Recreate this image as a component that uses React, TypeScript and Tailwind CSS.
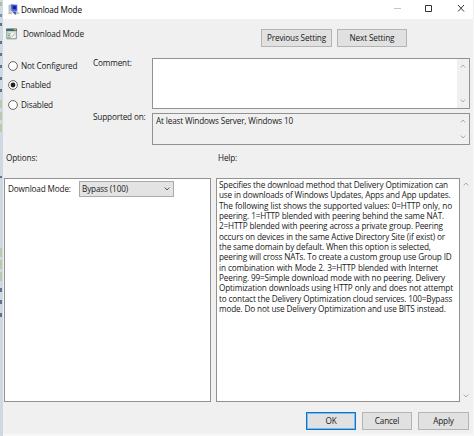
import type { ReactNode } from "react";
import clsx from "clsx";

const HELP_LINES = [
    { text: "Specifies the download method that Delivery Optimization can", width: "w-[229px]" },
    { text: "use in downloads of Windows Updates, Apps and App updates.", width: "w-[231px]" },
    { text: "The following list shows the supported values: 0=HTTP only, no", width: "w-[233px]" },
    { text: "peering. 1=HTTP blended with peering behind the same NAT.", width: "w-[225px]" },
    { text: "2=HTTP blended with peering across a private group. Peering", width: "w-[217px]" },
    { text: "occurs on devices in the same Active Directory Site (if exist) or", width: "w-[226px]" },
    { text: "the same domain by default. When this option is selected,", width: "w-[211px]" },
    { text: "peering will cross NATs. To create a custom group use Group ID", width: "w-[231px]" },
    { text: "in combination with Mode 2. 3=HTTP blended with Internet", width: "w-[219px]" },
    { text: "Peering. 99=Simple download mode with no peering. Delivery", width: "w-[226px]" },
    { text: "Optimization downloads using HTTP only and does not attempt", width: "w-[234px]" },
    { text: "to contact the Delivery Optimization cloud services. 100=Bypass", width: "w-[233px]" },
    { text: "mode. Do not use Delivery Optimization and use BITS instead.", width: "w-[225px]" },
];

// Slivers of the window behind, visible along the left edge
const BACKDROP_MARKS = [
    { y: 2, h: 4, color: "#b3bd9a" },
    { y: 14, h: 3, color: "#7f90a5" },
    { y: 23, h: 3, color: "#5d7390" },
    { y: 41, h: 3, color: "#5d7390" },
    { y: 53, h: 3, color: "#5d7390" },
    { y: 65, h: 3, color: "#5d7390" },
    { y: 77, h: 3, color: "#5d7390" },
    { y: 89, h: 3, color: "#5d7390" },
    { y: 100, h: 8, color: "#bfc8ab" },
    { y: 112, h: 8, color: "#bfc8ab" },
    { y: 124, h: 8, color: "#bfc8ab" },
    { y: 176, h: 2, color: "#5d7390" },
    { y: 248, h: 9, color: "#bfc8ab" },
    { y: 260, h: 9, color: "#bfc8ab" },
    { y: 272, h: 9, color: "#bfc8ab" },
    { y: 288, h: 4, color: "#5d7390" },
    { y: 300, h: 4, color: "#5d7390" },
    { y: 313, h: 4, color: "#5d7390" },
];

function Chevron({ down, className }: { down?: boolean; className?: string }) {
    return (
        <svg viewBox="0 0 6 4" className={clsx("h-1 w-1.5", className)} fill="none" stroke="currentColor">
            <path d={down ? "M.7.5 3 3 5.3.5" : "M.7 3.5 3 1l2.3 2.5"} />
        </svg>
    );
}

function ScrollBar({ className }: { className?: string }) {
    return (
        <div className={clsx("flex w-3 shrink-0 flex-col items-center justify-between bg-[#f0f0f0] text-[#ababab]", className)}>
            <Chevron />
            <Chevron down />
        </div>
    );
}

function Radio({ label, checked }: { label: string; checked?: boolean }) {
    return (
        <div className="flex h-[19.5px] items-center gap-[3px]">
            <svg viewBox="0 0 10 10" className="size-2.5">
                <circle cx="5" cy="5" r="4.4" fill="#fff" stroke="#444" strokeWidth=".8" />
                {checked && <circle cx="5" cy="5" r="2.4" fill="#222" />}
            </svg>
            {label}
        </div>
    );
}

function Button({ children, className }: { children: ReactNode; className?: string }) {
    return (
        <button className={clsx("flex h-[18px] items-center justify-center border bg-[#e1e1e1] leading-none", className)}>
            {children}
        </button>
    );
}

function TitleIcon() {
    return (
        <svg viewBox="0 0 12 12" className="size-3">
            <path d="M.5.8h3.4v6.5H.5z" fill="#b9bfd0" />
            <path d="M2.8.2 9.3.8v6.6L3.4 6.8z" fill="#4a70d8" />
            <path d="M4.6 1.4l3.7.5v3.6l-3.7-.6z" fill="#1522a4" />
            <path d="M3.5 7.2 8 7.4l2.6 1.8-3.4 1.6z" fill="#4c5fae" />
            <path d="M8 8.2h3.2v1.9H8z" fill="#c3c8d8" />
            <path d="M.4 7.6h3.4v2.6H.4z" fill="#c9c3a4" />
        </svg>
    );
}

function PolicyIcon() {
    return (
        <svg viewBox="0 0 12 12" className="size-3">
            <path d="M.9 1.2h9.4v9.6H.9z" fill="#e9eee6" stroke="#6d8588" strokeWidth=".9" />
            <path d="M.2.6H11v2.5H.2z" fill="#46666f" />
            <path d="M8 1h2.3v1.3H8z" fill="#d1a663" />
            <path d="M1.4 3.1h8.4v1.2H1.4z" fill="#b7cfc5" />
            <path d="M2 5.8h2.6M2 7.5h2M2 9.2h2.8" stroke="#6f8c84" strokeWidth=".9" />
            <path d="M5.4 5h4v5h-4z" fill="#f5f5eb" />
            <path d="M5.8 9 9 5.4" stroke="#8e9a86" strokeWidth=".8" />
        </svg>
    );
}

export default function App() {
    return (
        <div className="flex h-[436px] w-[474px] overflow-hidden bg-[#f0f0f0] font-['Open_Sans','Noto_Sans',sans-serif] text-[8.2px] leading-3 tracking-[-0.15px] whitespace-nowrap text-[#202020]">
            <div className="relative w-[3px] shrink-0 bg-[#cddae2]">
                {BACKDROP_MARKS.map((mark) => (
                    <div key={mark.y} className="absolute left-0 w-0.5" style={{ top: mark.y, height: mark.h, background: mark.color }} />
                ))}
            </div>

            <div className="flex min-w-0 flex-1 flex-col border-b-2 border-[#f8f8f8]">
                <header className="flex h-[19px] shrink-0 items-center bg-white pl-[5px]">
                    <TitleIcon />
                    <span className="ml-[1px] flex-1 text-black">Download Mode</span>
                    <svg viewBox="0 0 72 9" className="mr-2 mb-0.5 h-[9px] w-[72px]" fill="none" stroke="#333">
                        <path d="M1 4.5h7" stroke="#c4c4c4" />
                        <path d="M32.5 1.5h6v6h-6z" />
                        <path d="M65 1l6 6.5M71 1l-6 6.5" />
                    </svg>
                </header>

                <div className="flex h-[39px] shrink-0 pl-[3px]">
                    <div className="flex pt-[9px]">
                        <PolicyIcon />
                        <span className="ml-[5px]">Download Mode</span>
                    </div>
                    <div className="mt-2.5 mr-[66px] ml-auto flex gap-[5px]">
                        <Button className="w-[71px] border-[#b4b4b4]">Previous Setting</Button>
                        <Button className="w-[70px] border-[#b4b4b4]">Next Setting</Button>
                    </div>
                </div>

                <div className="flex h-[94px] shrink-0 pl-[5px]">
                    <div className="-mt-0.5 w-[85px]">
                        <Radio label="Not Configured" />
                        <Radio label="Enabled" checked />
                        <Radio label="Disabled" />
                    </div>
                    <div className="-mt-0.5 flex w-[59px] flex-col gap-[42px] pt-px">
                        <span>Comment:</span>
                        <span>Supported on:</span>
                    </div>
                    <div className="flex w-[318px] flex-col gap-1">
                        <div className="flex h-[51px] justify-end border border-[#929292] bg-white">
                            <ScrollBar className="py-[5px]" />
                        </div>
                        <div className="flex h-8 justify-between border border-[#929292] pl-[3px]">
                            <span className="mt-px">At least Windows Server, Windows 10</span>
                            <ScrollBar className="py-[5px]" />
                        </div>
                    </div>
                </div>

                <div className="flex h-[26px] shrink-0 pl-[3px]">
                    <span className="w-[212px]">Options:</span>
                    <span>Help:</span>
                </div>

                <div className="flex h-[224px] shrink-0 pl-px">
                    <div className="flex w-[207px] items-start border border-[#929292] bg-white pt-0.5 pl-[3px]">
                        <span className="mt-0.5 w-[71px]">Download Mode:</span>
                        <div className="flex h-4 w-[95px] items-center justify-between border border-[#aaa] bg-[#e3e3e3] pr-[3px] pl-0.5">
                            <span>Bypass (100)</span>
                            <Chevron down className="text-[#555]" />
                        </div>
                    </div>
                    <div className="ml-[5px] w-[244px] border border-[#929292] bg-white pt-px pl-[2px] leading-[10.35px]">
                        {HELP_LINES.map((line) => (
                            <div key={line.text} className={clsx("[text-align-last:justify]", line.width)}>{line.text}</div>
                        ))}
                    </div>
                    <ScrollBar className="pt-1 pb-1" />
                </div>

                <footer className="flex flex-1 items-start justify-end gap-1.5 pt-2.5 pr-1">
                    <Button className="w-[50px] border-[#0078d7] ring-1 ring-[#0078d7]/40 ring-inset">OK</Button>
                    <Button className="w-[50px] border-[#b4b4b4]">Cancel</Button>
                    <Button className="w-[51px] border-[#b4b4b4]">Apply</Button>
                </footer>
            </div>
            <div className="mt-[19px] w-px shrink-0 bg-[#f8f8f8]" />
        </div>
    );
}
